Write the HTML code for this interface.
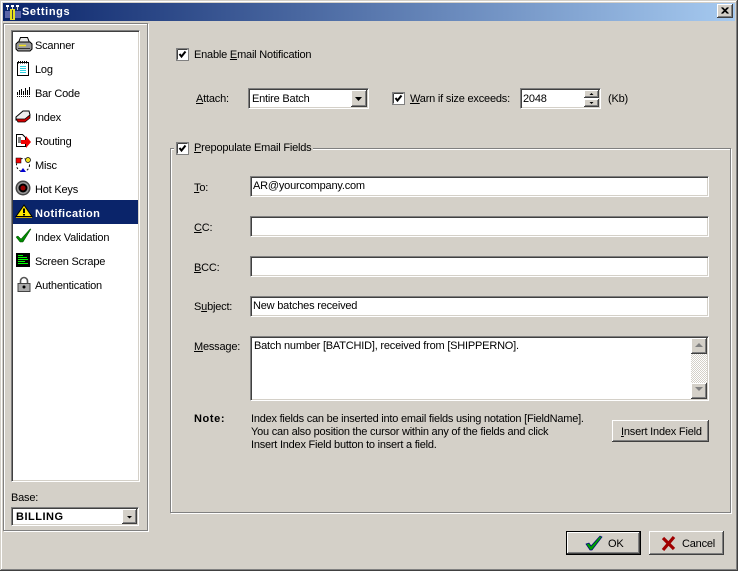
<!DOCTYPE html>
<html><head><meta charset="utf-8"><style>
html,body{margin:0;padding:0}
body{width:738px;height:571px;overflow:hidden;position:relative;background:#d4d0c8;font:11px "Liberation Sans",sans-serif;color:#000}
div,svg{position:absolute;box-sizing:border-box}
.t{white-space:nowrap;line-height:13px;height:13px;letter-spacing:-.2px}
.in{background:#fff;border:1px solid;border-color:#808080 #fff #fff #808080;box-shadow:inset 1px 1px 0 #404040,inset -1px -1px 0 #d4d0c8}
.btn{background:#d4d0c8;box-shadow:inset -1px -1px 0 #404040,inset 1px 1px 0 #fff,inset -2px -2px 0 #808080}
.cb{width:13px;height:13px}
u{text-decoration:underline}
</style></head><body>
<div style="left:0;top:0;width:738px;height:571px;box-shadow:inset -1px -1px 0 #404040,inset 1px 1px 0 #d4d0c8,inset -2px -2px 0 #808080,inset 2px 2px 0 #fff"></div>
<div style="left:3px;top:3px;width:732px;height:18px;background:linear-gradient(90deg,#0a246a,#a6caf0)"></div>
<svg style="left:5px;top:4px" width="16" height="16" viewBox="0 0 16 16"><path d="M1 1h3v2H1zM6 1h3v2H6zM11 1h3v2h-3z" fill="#fff"/><path d="M2.500 3v3M7.500 3v3M12.500 3v3" stroke="#ccc"/><rect x="0" y="7" width="16" height="7" fill="#5a64a8"/><rect x="5" y="5" width="5" height="11" fill="#e8e020"/><path d="M7.500 6v9" stroke="#444"/></svg>
<div class="t" style="left:22px;top:5px;color:#fff;font-weight:bold;font-size:11px;line-height:14px;letter-spacing:.6px">Settings</div>
<div class="btn" style="left:717px;top:4px;width:16px;height:14px"></div>
<svg style="left:717px;top:4px" width="16" height="14"><path d="M4.500 3.500l6 6M10.500 3.500l-6 6M5.500 3.500l6 6M11.500 3.500l-6 6" stroke="#000" fill="none"/></svg>

<div style="left:3px;top:23px;width:145px;height:508px;border:1px solid #808080;box-shadow:inset 1px 1px 0 #fff,1px 1px 0 #fff"></div>
<div class="in" style="left:11px;top:30px;width:129px;height:452px"></div>
<div style="left:13px;top:200px;width:125px;height:24px;background:#0a246a"></div>

<svg style="left:15px;top:36px" width="18" height="17" viewBox="0 0 18 17"><path d="M5.500 1.500h7l2 5h-11z" fill="#e8e8e8" stroke="#000"/><path d="M1 8l2-2h12l2 2v5l-2 2H3l-2-2z" fill="#999" stroke="#000"/><path d="M4 9.500h7" stroke="#f0e020" stroke-width="1.500"/><path d="M3 12.500h12" stroke="#333"/></svg>
<div class="t" style="left:35px;top:40px">Scanner</div>
<svg style="left:16px;top:60px" width="15" height="17" viewBox="0 0 15 17"><rect x="1.500" y="2.500" width="11" height="13" fill="#fff" stroke="#000"/><path d="M2.500 1v3M4.500 1v3M6.500 1v3M8.500 1v3M10.500 1v3" stroke="#000" stroke-dasharray="1 .5"/><path d="M4 6.500h6M4 8.500h6M4 10.500h6M4 12.500h6" stroke="#30d0e0"/></svg>
<div class="t" style="left:35px;top:64px">Log</div>
<svg style="left:16px;top:86px" width="15" height="12" viewBox="0 0 15 12"><path d="M1.500 6v3M3.500 4v5M5.500 3v6M7.500 5v4M9.500 2v7M11.500 4v5M13.500 1v8" stroke="#000"/><path d="M1 10.500h13" stroke="#000" stroke-dasharray="1 1"/></svg>
<div class="t" style="left:35px;top:88px">Bar Code</div>
<svg style="left:15px;top:109px" width="17" height="15" viewBox="0 0 17 15"><path d="M1 8l7-6h6l1 4-6 5H1z" fill="#eee" stroke="#000"/><path d="M1 10h9l5-4v3l-5 4H3z" fill="#d80000" stroke="#000" stroke-width=".7"/></svg>
<div class="t" style="left:35px;top:112px">Index</div>
<svg style="left:15px;top:133px" width="17" height="16" viewBox="0 0 17 16"><path d="M1.500 1.500h6l3 3v9h-9z" fill="#fff" stroke="#000"/><path d="M3 5h3M3 7h3M3 9h3" stroke="#000"/><path d="M6 7h5V3l5 6-5 6v-4H6z" fill="#f00000"/></svg>
<div class="t" style="left:35px;top:136px">Routing</div>
<svg style="left:15px;top:156px" width="17" height="17" viewBox="0 0 17 17"><circle cx="8" cy="9" r="6.500" fill="none" stroke="#000" stroke-dasharray="2 2"/><rect x="1" y="2" width="5" height="5" fill="#f00000" stroke="#000" stroke-width=".5"/><circle cx="13" cy="4" r="2.500" fill="#f0e020" stroke="#000" stroke-width=".7"/><path d="M8 12l3 4H5z" fill="#0000d0"/></svg>
<div class="t" style="left:35px;top:160px">Misc</div>
<svg style="left:15px;top:180px" width="17" height="17" viewBox="0 0 17 17"><circle cx="8" cy="8" r="7.500" fill="#444"/><circle cx="8" cy="8" r="6" fill="#999"/><circle cx="8" cy="8" r="4.500" fill="#000"/><circle cx="8" cy="8" r="2.500" fill="#900"/></svg>
<div class="t" style="left:35px;top:184px">Hot Keys</div>
<svg style="left:15px;top:204px" width="18" height="15" viewBox="0 0 18 15"><path d="M9 1l8 11.500H1z" fill="#ffe800" stroke="#000"/><path d="M9 4.500v4.500M9 10v1.500" stroke="#000" stroke-width="2"/><path d="M1 13.500h16" stroke="#c8a800"/></svg>
<div class="t" style="left:35px;top:208px;color:#fff;font-weight:bold;letter-spacing:.4px">Notification</div>
<svg style="left:15px;top:228px" width="17" height="16" viewBox="0 0 17 16"><path d="M1 9l2-1 3 3 9-10h1L8 14H5z" fill="#008a00" stroke="#004000" stroke-width=".5"/></svg>
<div class="t" style="left:35px;top:232px">Index Validation</div>
<svg style="left:16px;top:253px" width="14" height="14" viewBox="0 0 14 14"><rect width="14" height="14" fill="#000"/><path d="M2 2.500h5M2 4.500h9M2 6.500h10M2 8.500h7M2 10.500h10" stroke="#00ff00"/></svg>
<div class="t" style="left:35px;top:256px">Screen Scrape</div>
<svg style="left:17px;top:276px" width="14" height="17" viewBox="0 0 14 17"><path d="M3.500 8V5a3.500 3.500 0 017 0v3" fill="none" stroke="#555" stroke-width="1.600"/><rect x="1" y="7.500" width="12" height="8" fill="#aaa" stroke="#444"/><circle cx="7" cy="11" r="1.500" fill="#000"/></svg>
<div class="t" style="left:35px;top:280px">Authentication</div>

<div class="t" style="left:11px;top:492px">Base:</div>
<div class="in" style="left:11px;top:507px;width:128px;height:19px"></div>
<div class="t" style="left:16px;top:511px;font-weight:bold;letter-spacing:.5px">BILLING</div>
<div class="btn" style="left:122px;top:509px;width:15px;height:15px"></div>
<svg style="left:122px;top:509px" width="15" height="15"><path d="M5 7h5L7.500 9.500z" fill="#000"/></svg>

<svg class="cb" style="left:176px;top:48px" width="13" height="13"><rect x=".5" y=".5" width="12" height="12" fill="#fff" stroke="#808080"/><path d="M1.500 1.500h10M1.500 1.500v10" stroke="#404040"/><path d="M3.500 6l2 2.500 4-5" stroke="#000" stroke-width="2" fill="none"/></svg>
<div class="t" style="left:194px;top:49px">Enable <u>E</u>mail Notification</div>
<div class="t" style="left:196px;top:93px"><u>A</u>ttach:</div>
<div class="in" style="left:248px;top:88px;width:121px;height:21px"></div>
<div class="t" style="left:252px;top:93px">Entire Batch</div>
<div class="btn" style="left:351px;top:90px;width:16px;height:17px"></div>
<svg style="left:351px;top:90px" width="16" height="17"><path d="M4 7h7L7.500 11z" fill="#000"/></svg>
<svg class="cb" style="left:392px;top:92px" width="13" height="13"><rect x=".5" y=".5" width="12" height="12" fill="#fff" stroke="#808080"/><path d="M1.500 1.500h10M1.500 1.500v10" stroke="#404040"/><path d="M3.500 6l2 2.500 4-5" stroke="#000" stroke-width="2" fill="none"/></svg>
<div class="t" style="left:410px;top:93px"><u>W</u>arn if size exceeds:</div>
<div class="in" style="left:520px;top:88px;width:81px;height:21px"></div>
<div class="t" style="left:523px;top:93px">2048</div>
<div class="btn" style="left:584px;top:90px;width:15px;height:8px"></div>
<div class="btn" style="left:584px;top:99px;width:15px;height:8px"></div>
<svg style="left:584px;top:90px" width="15" height="17"><path d="M7.500 3l2 2h-4zM5.500 12h4l-2 2z" fill="#000"/></svg>
<div class="t" style="left:608px;top:93px">(Kb)</div>

<div style="left:170px;top:148px;width:561px;height:365px;border:1px solid #808080;box-shadow:inset 1px 1px 0 #fff,1px 1px 0 #fff"></div>
<div style="left:174px;top:140px;width:139px;height:16px;background:#d4d0c8"></div>
<svg class="cb" style="left:176px;top:142px" width="13" height="13"><rect x=".5" y=".5" width="12" height="12" fill="#fff" stroke="#808080"/><path d="M1.500 1.500h10M1.500 1.500v10" stroke="#404040"/><path d="M3.500 6l2 2.500 4-5" stroke="#000" stroke-width="2" fill="none"/></svg>
<div class="t" style="left:194px;top:142px"><u>P</u>repopulate Email Fields</div>

<div class="t" style="left:194px;top:182px"><u>T</u>o:</div>
<div class="in" style="left:250px;top:176px;width:459px;height:21px"></div>
<div class="t" style="left:253px;top:180px">AR@yourcompany.com</div>
<div class="t" style="left:194px;top:222px"><u>C</u>C:</div>
<div class="in" style="left:250px;top:216px;width:459px;height:21px"></div>
<div class="t" style="left:194px;top:262px"><u>B</u>CC:</div>
<div class="in" style="left:250px;top:256px;width:459px;height:21px"></div>
<div class="t" style="left:194px;top:301px">S<u>u</u>bject:</div>
<div class="in" style="left:250px;top:296px;width:459px;height:21px"></div>
<div class="t" style="left:253px;top:300px">New batches received</div>
<div class="t" style="left:194px;top:341px"><u>M</u>essage:</div>
<div class="in" style="left:250px;top:336px;width:459px;height:65px"></div>
<div class="t" style="left:254px;top:340px">Batch number [BATCHID], received from [SHIPPERNO].</div>
<div style="left:691px;top:338px;width:16px;height:61px;background:repeating-conic-gradient(#d4d0c8 0 25%,#fff 0 50%) 0 0/2px 2px"></div>
<div class="btn" style="left:691px;top:338px;width:16px;height:16px"></div>
<div class="btn" style="left:691px;top:383px;width:16px;height:16px"></div>
<svg style="left:691px;top:338px" width="16" height="61"><path d="M8 5l4 4H4zM4 49h8l-4 4z" fill="#808080"/></svg>

<div class="t" style="left:194px;top:413px;font-weight:bold;letter-spacing:.6px">Note:</div>
<div class="t" style="left:251px;top:413px;letter-spacing:-.23px">Index fields can be inserted into email fields using notation [FieldName].</div>
<div class="t" style="left:251px;top:426px;letter-spacing:-.23px">You can also position the cursor within any of the fields and click</div>
<div class="t" style="left:251px;top:439px;letter-spacing:-.23px">Insert Index Field button to insert a field.</div>
<div class="btn" style="left:612px;top:420px;width:97px;height:22px"></div>
<div class="t" style="left:621px;top:426px"><u>I</u>nsert Index Field</div>

<div class="btn" style="left:566px;top:531px;width:75px;height:24px;border:1px solid #000"></div>
<svg style="left:585px;top:535px" width="18" height="17" viewBox="0 0 18 17"><path d="M1 9l3-1 2 3 9-10 2 1-10 13H5z" fill="#00a000" stroke="#000080" stroke-width=".7"/></svg>
<div class="t" style="left:608px;top:538px">OK</div>
<div class="btn" style="left:649px;top:531px;width:75px;height:24px"></div>
<svg style="left:661px;top:536px" width="15" height="16" viewBox="0 0 15 16"><path d="M2 2l11 11M13 1L2 14" stroke="#a00000" stroke-width="3.200" fill="none"/></svg>
<div class="t" style="left:682px;top:538px">Cancel</div>
</body></html>
